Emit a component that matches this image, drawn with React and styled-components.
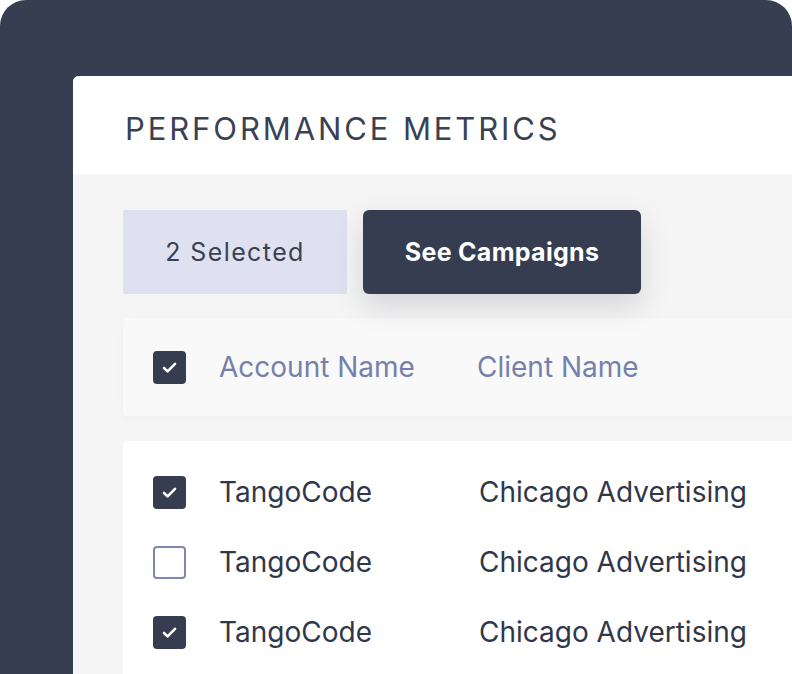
import React from "react";
import styled, { createGlobalStyle } from "styled-components";

const Global = createGlobalStyle`
  html, body {
    margin: 0;
    padding: 0;
    background: #ffffff;
  }
  * {
    box-sizing: border-box;
  }
`;

const Frame = styled.div`
  width: 792px;
  height: 674px;
  background: #373e51;
  border-radius: 26px 26px 0 0;
  padding: 76px 0 0 73px;
  overflow: hidden;
  font-family: Inter, "Liberation Sans", sans-serif;
`;

const Panel = styled.div`
  width: 760px;
  height: 100%;
  background: #f5f5f5;
  border-top-left-radius: 6px;
  overflow: hidden;
`;

const Header = styled.div`
  height: 98px;
  background: #ffffff;
  padding: 6px 0 0 52px;
  display: flex;
  align-items: center;
`;

const Title = styled.h1`
  margin: 0;
  font-size: 31px;
  font-weight: 400;
  letter-spacing: 2.9px;
  color: #3a4152;
  white-space: nowrap;
`;

const Content = styled.div`
  padding: 36px 0 0 50px;
`;

const Toolbar = styled.div`
  display: flex;
  gap: 16px;
`;

const Selected = styled.div`
  width: 224px;
  height: 84px;
  background: #dfe1f0;
  display: flex;
  align-items: center;
  justify-content: center;
  font-size: 25px;
  letter-spacing: 1.4px;
  color: #3a4152;
  border-radius: 2px;
`;

const Button = styled.button`
  width: 278px;
  height: 84px;
  border: none;
  border-radius: 6px;
  background: #363d51;
  color: #ffffff;
  font-family: inherit;
  font-size: 25px;
  font-weight: 700;
  letter-spacing: 0.3px;
  box-shadow: 0 12px 30px rgba(40, 45, 60, 0.16);
  cursor: pointer;
`;

const HeadRow = styled.div`
  margin-top: 24px;
  height: 98px;
  background: #f9f9f9;
  border-radius: 4px 0 0 4px;
  box-shadow: 0 2px 10px rgba(0, 0, 0, 0.025);
  display: flex;
  align-items: center;
  padding-left: 30px;
`;

const Body = styled.div`
  margin-top: 25px;
  background: #ffffff;
  border-radius: 4px 0 0 0;
  padding-top: 16px;
  height: 300px;
`;

const Row = styled.div`
  height: 70px;
  display: flex;
  align-items: center;
  padding-left: 30px;
`;

const Box = styled.span`
  width: 33px;
  height: 33px;
  flex: none;
  border-radius: 4px;
  display: flex;
  align-items: center;
  justify-content: center;
  background: ${(p) => (p.$checked ? "#363d51" : "#ffffff")};
  border: ${(p) => (p.$checked ? "none" : "2px solid #7d88b0")};
`;

const Cell = styled.span`
  font-size: 28px;
  color: ${(p) => (p.$head ? "#7581ab" : "#30374a")};
  width: ${(p) => p.$w || "auto"};
  white-space: nowrap;
  margin-left: ${(p) => p.$ml || "0"};
`;

const Check = ({ checked }) => (
  <Box $checked={checked}>
    {checked && (
      <svg width="15" height="13" viewBox="0 0 15 13" fill="none">
        <path
          d="M2 7 L5.6 10.4 L13 2.8"
          stroke="#ffffff"
          strokeWidth="2.6"
          strokeLinecap="round"
          strokeLinejoin="round"
        />
      </svg>
    )}
  </Box>
);

const rows = [true, false, true];

export default function App() {
  return (
    <>
      <Global />
      <Frame>
        <Panel>
          <Header>
            <Title>PERFORMANCE METRICS</Title>
          </Header>
          <Content>
            <Toolbar>
              <Selected>2 Selected</Selected>
              <Button>See Campaigns</Button>
            </Toolbar>
            <HeadRow>
              <Check checked />
              <Cell $head $ml="33px" $w="258px">
                Account Name
              </Cell>
              <Cell $head>Client Name</Cell>
            </HeadRow>
            <Body>
              {rows.map((c, i) => (
                <Row key={i}>
                  <Check checked={c} />
                  <Cell $ml="33px" $w="260px">
                    TangoCode
                  </Cell>
                  <Cell>Chicago Advertising</Cell>
                </Row>
              ))}
            </Body>
          </Content>
        </Panel>
      </Frame>
    </>
  );
}
